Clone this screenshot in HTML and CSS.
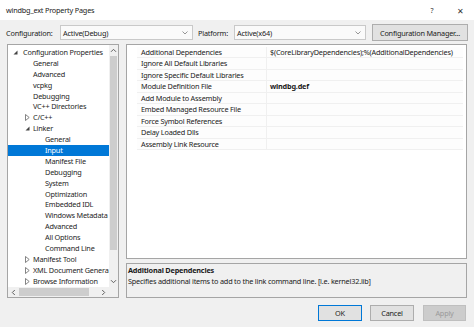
FILE: index.html
```html
<!DOCTYPE html>
<html>
<head>
<meta charset="utf-8">
<link rel="stylesheet" href="styles.css">
</head>
<body>
<div class="dialog">
  <div class="titlebar">
    <span class="title">windbg_ext Property Pages</span>
    <span class="tb-btn help">?</span>
    <span class="tb-btn close">&#x2715;</span>
  </div>

  <div class="config-row">
    <span class="lbl lbl-config">Configuration:</span>
    <div class="select sel-config"><span class="sel-text">Active(Debug)</span><svg class="chev" width="6" height="4" viewBox="0 0 6 4"><polyline points="0.5,0.5 3,3 5.5,0.5" fill="none" stroke="#8a8a8a" stroke-width="0.9"/></svg></div>
    <span class="lbl lbl-plat">Platform:</span>
    <div class="select sel-plat"><span class="sel-text">Active(x64)</span><svg class="chev" width="6" height="4" viewBox="0 0 6 4"><polyline points="0.5,0.5 3,3 5.5,0.5" fill="none" stroke="#8a8a8a" stroke-width="0.9"/></svg></div>
    <button class="btn cfgmgr">Configuration Manager...</button>
  </div>

  <div class="main">
    <div class="tree">
      <ul class="tree-list">
        <li class="node l0"><svg class="exp" width="5" height="5" viewBox="0 0 5 5"><polygon points="4.5,0.5 4.5,4.5 0.5,4.5" fill="#444"/></svg>Configuration Properties</li>
        <li class="node l1">General</li>
        <li class="node l1">Advanced</li>
        <li class="node l1">vcpkg</li>
        <li class="node l1">Debugging</li>
        <li class="node l1">VC++ Directories</li>
        <li class="node l1"><svg class="col" width="5" height="7" viewBox="0 0 5 7"><polygon points="0.5,0.5 4.2,3.5 0.5,6.5" fill="none" stroke="#666" stroke-width="0.8"/></svg>C/C++</li>
        <li class="node l1"><svg class="exp" width="5" height="5" viewBox="0 0 5 5"><polygon points="4.5,0.5 4.5,4.5 0.5,4.5" fill="#444"/></svg>Linker</li>
        <li class="node l2">General</li>
        <li class="node l2 selected">Input</li>
        <li class="node l2">Manifest File</li>
        <li class="node l2">Debugging</li>
        <li class="node l2">System</li>
        <li class="node l2">Optimization</li>
        <li class="node l2">Embedded IDL</li>
        <li class="node l2">Windows Metadata</li>
        <li class="node l2">Advanced</li>
        <li class="node l2">All Options</li>
        <li class="node l2">Command Line</li>
        <li class="node l1"><svg class="col" width="5" height="7" viewBox="0 0 5 7"><polygon points="0.5,0.5 4.2,3.5 0.5,6.5" fill="none" stroke="#666" stroke-width="0.8"/></svg>Manifest Tool</li>
        <li class="node l1"><svg class="col" width="5" height="7" viewBox="0 0 5 7"><polygon points="0.5,0.5 4.2,3.5 0.5,6.5" fill="none" stroke="#666" stroke-width="0.8"/></svg>XML Document Genera</li>
        <li class="node l1"><svg class="col" width="5" height="7" viewBox="0 0 5 7"><polygon points="0.5,0.5 4.2,3.5 0.5,6.5" fill="none" stroke="#666" stroke-width="0.8"/></svg>Browse Information</li>
      </ul>
      <div class="vscroll">
        <svg class="arrow" width="7" height="5" viewBox="0 0 7 5"><polyline points="1,3.8 3.5,1.3 6,3.8" fill="none" stroke="#606060" stroke-width="1"/></svg>
        <div class="vtrack"><div class="vthumb"></div></div>
        <svg class="arrow" width="7" height="5" viewBox="0 0 7 5"><polyline points="1,1.2 3.5,3.7 6,1.2" fill="none" stroke="#606060" stroke-width="1"/></svg>
      </div>
      <div class="hscroll">
        <svg class="arrow" width="5" height="7" viewBox="0 0 5 7"><polyline points="3.8,1 1.3,3.5 3.8,6" fill="none" stroke="#606060" stroke-width="1"/></svg>
        <div class="htrack"><div class="hthumb"></div></div>
        <svg class="arrow" width="5" height="7" viewBox="0 0 5 7"><polyline points="1.2,1 3.7,3.5 1.2,6" fill="none" stroke="#606060" stroke-width="1"/></svg>
      </div>
      <div class="corner"></div>
    </div>

    <div class="right">
      <div class="grid">
        <div class="row"><span class="name">Additional Dependencies</span><span class="val">$(CoreLibraryDependencies);%(AdditionalDependencies)</span></div>
        <div class="row"><span class="name">Ignore All Default Libraries</span><span class="val"></span></div>
        <div class="row"><span class="name">Ignore Specific Default Libraries</span><span class="val"></span></div>
        <div class="row"><span class="name">Module Definition File</span><span class="val bold">windbg.def</span></div>
        <div class="row"><span class="name">Add Module to Assembly</span><span class="val"></span></div>
        <div class="row"><span class="name">Embed Managed Resource File</span><span class="val"></span></div>
        <div class="row"><span class="name">Force Symbol References</span><span class="val"></span></div>
        <div class="row"><span class="name">Delay Loaded Dlls</span><span class="val"></span></div>
        <div class="row"><span class="name">Assembly Link Resource</span><span class="val"></span></div>
      </div>
      <div class="desc">
        <div class="desc-title">Additional Dependencies</div>
        <div class="desc-text">Specifies additional items to add to the link command line. [i.e. kernel32.lib]</div>
      </div>
    </div>
  </div>

  <div class="footer">
    <button class="btn ok">OK</button>
    <button class="btn cancel">Cancel</button>
    <button class="btn apply" disabled>Apply</button>
  </div>
</div>
</body>
</html>
```

FILE: styles.css
```css
* { box-sizing: border-box; margin: 0; padding: 0; }
html, body { width: 474px; height: 327px; overflow: hidden; }
body {
  background: #f0f0f0;
  font-family: "Noto Sans", "Open Sans", sans-serif;
  font-size: 7.3px;
  letter-spacing: -0.2px;
  color: #1b1b1b;
}
.dialog { width: 474px; height: 327px; }

.titlebar {
  height: 20px;
  background: #fff;
  display: flex;
  align-items: center;
  padding-left: 6px;
}
.title { flex: 1; }
.tb-btn { width: 28px; text-align: center; color: #333; }
.help { font-size: 7px; }
.close { font-size: 8px; }

.config-row {
  margin-top: 4px;
  height: 17px;
  display: flex;
  align-items: center;
  padding-left: 6px;
}
.lbl-config { width: 54px; }
.lbl-plat { width: 36px; margin-left: 5px; }
.select {
  height: 15px;
  background: #fafafa;
  border: 1px solid #c9c9c9;
  display: flex;
  align-items: center;
  padding-left: 2px;
  padding-right: 4px;
}
.sel-config { width: 133px; }
.sel-plat { width: 132px; }
.sel-text { flex: 1; }
.chev { display: block; }

.btn {
  font-family: inherit;
  font-size: 7.3px;
  letter-spacing: -0.2px;
  color: #1b1b1b;
  background: #e1e1e1;
  border: 1px solid #adadad;
  height: 16px;
}
.cfgmgr { width: 96px; height: 17px; margin-left: 6px; }

.main {
  margin-top: 3px;
  height: 254px;
  display: flex;
  padding-left: 7px;
  gap: 7px;
}

/* tree */
.tree {
  width: 112px;
  background: #fff;
  border: 1px solid #a5a5a5;
  display: grid;
  grid-template-columns: 1fr 9px;
  grid-template-rows: 1fr 10px;
}
.tree-list {
  list-style: none;
  padding-top: 2px;
  overflow: hidden;
}
.node {
  height: 10.9px;
  line-height: 10.9px;
  white-space: nowrap;
  position: relative;
  color: #1e1e1e;
}
.node.l0 { padding-left: 15px; }
.node.l1 { padding-left: 25px; }
.node.l2 { padding-left: 37px; }
.node svg { position: absolute; top: 3px; }
.l0 .exp { left: 5px; }
.l1 .exp { left: 17px; }
.l1 .col { left: 17px; top: 2px; }
.node.selected { background: #0078d7; color: #fff; }

.vscroll {
  background: #f0f0f0;
  display: flex;
  flex-direction: column;
  align-items: center;
}
.vscroll .arrow { margin: 3px 0; }
.vtrack { flex: 1; width: 100%; padding: 0 1px; }
.vthumb { margin-top: 0; height: 194px; background: #cdcdcd; }

.hscroll {
  background: #f0f0f0;
  display: flex;
  align-items: center;
  padding: 0 3px;
}
.htrack { flex: 1; height: 100%; padding: 1px 4px 1px 3px; }
.hthumb { width: 70px; height: 100%; background: #cdcdcd; }
.corner { background: #f0f0f0; }

/* right side */
.right {
  width: 341px;
  display: flex;
  flex-direction: column;
  gap: 4px;
}
.grid {
  height: 215px;
  background: #fff;
  border: 1px solid #a5a5a5;
  padding: 1.5px 3px 0 10px;
}
.row {
  display: flex;
  height: 11.5px;
  line-height: 11px;
  border-bottom: 1px solid #f0f0f0;
  background: #fdfdfd;
}
.name {
  width: 130px;
  padding-left: 4px;
  border-right: 1px solid #f0f0f0;
  white-space: nowrap;
}
.val { flex: 1; padding-left: 3px; white-space: nowrap; }
.bold { font-weight: 700; }

.desc {
  height: 35px;
  border: 1px solid #a5a5a5;
  background: #f0f0f0;
  padding: 1px 0 0 1px;
  line-height: 11px;
}
.desc-title { font-weight: 700; }

.footer {
  margin-top: 7px;
  display: flex;
  padding-left: 318px;
}
.ok { width: 44px; border-color: #0078d7; }
.cancel { width: 44px; margin-left: 8px; }
.apply { width: 43px; margin-left: 9px; background: #cccccc; border-color: #bfbfbf; color: #9a9a9a; }
```
